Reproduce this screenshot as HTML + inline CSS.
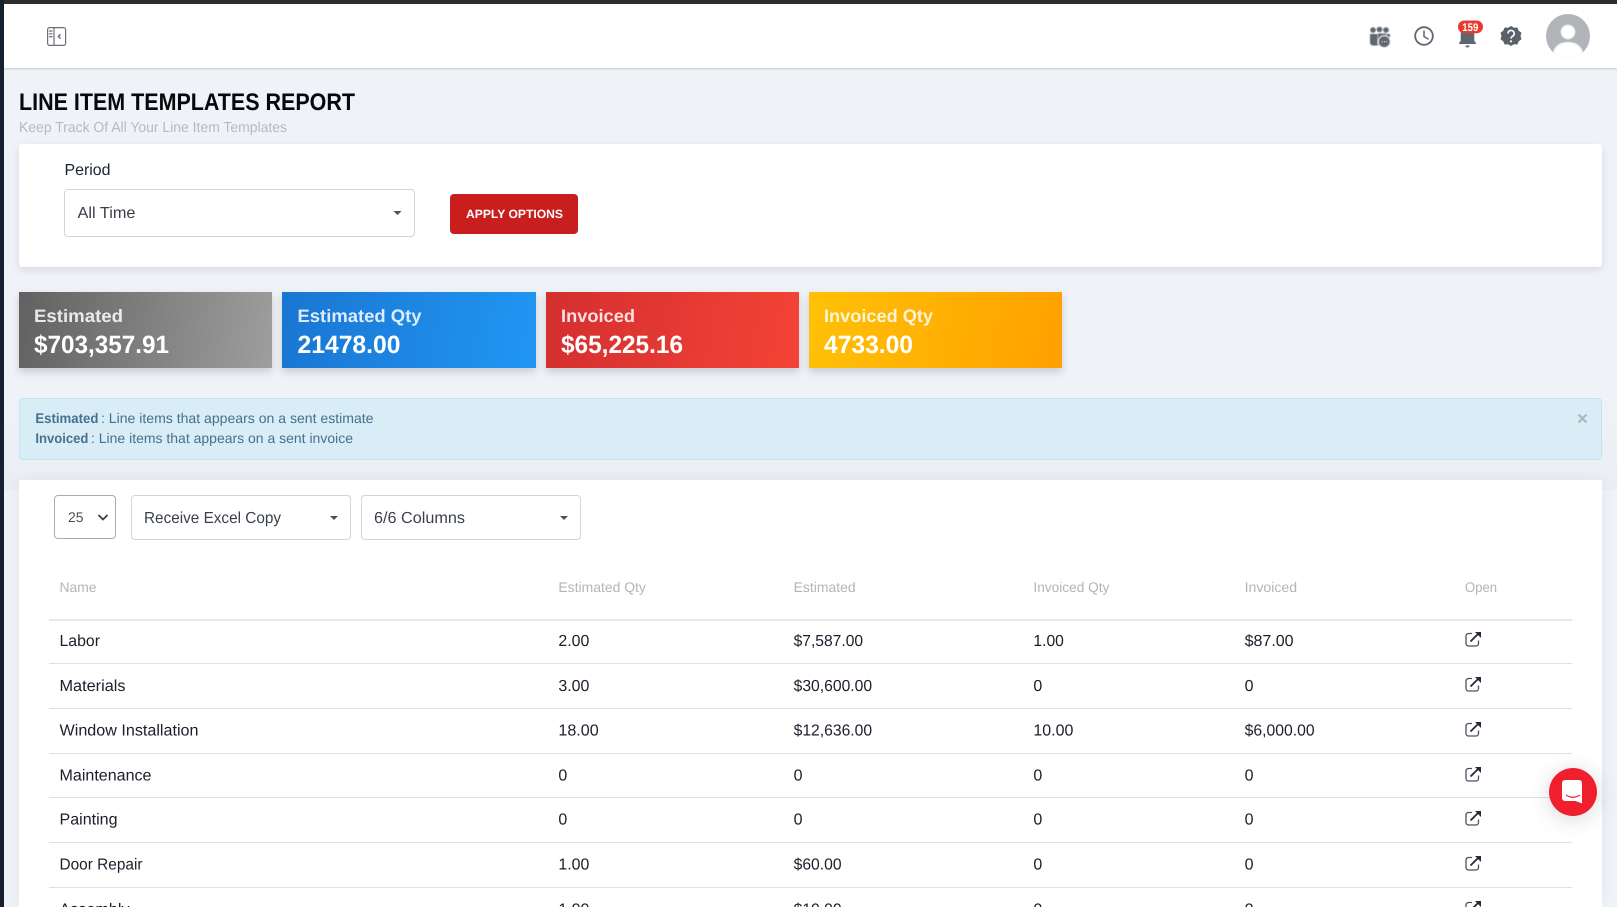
<!DOCTYPE html>
<html lang="en"><head><meta charset="utf-8"><title>Line Item Templates Report</title>
<style>
html,body{margin:0;padding:0;width:1617px;height:907px;overflow:hidden;background:#eff3f8}
.b{position:absolute;box-sizing:border-box}
svg{position:absolute;left:0;top:0}
text{font-family:"Liberation Sans",Arial,sans-serif;font-size:16px;fill:#1a1f2b;text-rendering:geometricPrecision}
.h{font-size:14px;fill:#b5b5b5}
.l{font-size:18px;fill:rgba(255,255,255,.85);font-weight:700}
.v{font-size:25px;fill:#fff;font-weight:700}
.a{font-size:14px;fill:#45718f}
.ab{font-size:14px;fill:#45718f;font-weight:700}
</style></head><body>
<div class="b" style="left:0;top:0;width:1617px;height:4px;background:#2b2d2f"></div>
<div class="b" style="left:0;top:0;width:4px;height:907px;background:#16202f"></div>
<div class="b" style="left:4px;top:4px;width:1613px;height:64px;background:#fff;box-shadow:0 1px 2px rgba(0,0,0,.18)"></div>
<div class="b" style="left:19px;top:144px;width:1583px;height:123px;background:#fff;border-radius:3px;box-shadow:0 3px 8px rgba(0,0,0,.1)"></div>
<div class="b" style="left:64px;top:189px;width:351px;height:48px;background:#fff;border:1px solid #cdd5e1;border-radius:4px"></div>
<div class="b" style="left:450px;top:194px;width:128px;height:40px;background:#c81e1e;border-radius:4px"></div>
<div class="b" style="left:4px;top:380px;width:1613px;height:110px;background:linear-gradient(#eff3f8 0,#eff3f8 15%,#eaeef2 100%)"></div>
<div class="b" style="left:19px;top:292px;width:253px;height:76px;background:linear-gradient(100deg,#616161,#9e9e9e);box-shadow:0 4px 8px rgba(0,0,0,.16)"></div>
<div class="b" style="left:282px;top:292px;width:254px;height:76px;background:linear-gradient(100deg,#1976d2,#2196f3);box-shadow:0 4px 8px rgba(0,0,0,.16)"></div>
<div class="b" style="left:546px;top:292px;width:253px;height:76px;background:linear-gradient(100deg,#d32f2f,#f44336);box-shadow:0 4px 8px rgba(0,0,0,.16)"></div>
<div class="b" style="left:809px;top:292px;width:253px;height:76px;background:linear-gradient(100deg,#ffc107,#ffa000);box-shadow:0 4px 8px rgba(0,0,0,.16)"></div>
<div class="b" style="left:19px;top:398px;width:1583px;height:62px;background:#d9edf6;border:1px solid #bfe6f2;border-radius:4px"></div>
<div class="b" style="left:19px;top:480px;width:1583px;height:427px;background:#fff;box-shadow:0 0 14px rgba(0,0,0,.05)"></div>
<div class="b" style="left:54px;top:495px;width:62px;height:44px;background:#fff;border:1px solid #a9adb3;border-radius:4px"></div>
<div class="b" style="left:131px;top:495px;width:220px;height:45px;background:#fff;border:1px solid #cdd5e1;border-radius:4px"></div>
<div class="b" style="left:361px;top:495px;width:220px;height:45px;background:#fff;border:1px solid #cdd5e1;border-radius:4px"></div>
<div class="b" style="left:49px;top:619px;width:1523px;height:2px;background:#e8e8e8"></div>
<div class="b" style="left:49px;top:663px;width:1523px;height:1px;background:#dbe1ea"></div>
<div class="b" style="left:49px;top:708px;width:1523px;height:1px;background:#dbe1ea"></div>
<div class="b" style="left:49px;top:753px;width:1523px;height:1px;background:#dbe1ea"></div>
<div class="b" style="left:49px;top:797px;width:1523px;height:1px;background:#dbe1ea"></div>
<div class="b" style="left:49px;top:842px;width:1523px;height:1px;background:#dbe1ea"></div>
<div class="b" style="left:49px;top:887px;width:1523px;height:1px;background:#dbe1ea"></div>
<div class="b" style="left:1549px;top:768px;width:48px;height:48px;border-radius:50%;background:#ef1f2d;box-shadow:0 3px 22px rgba(0,0,0,.16)"></div>

<svg width="1617" height="907" viewBox="0 0 1617 907" xmlns="http://www.w3.org/2000/svg">
<defs>
<g id="ext" fill="none">
<path d="M7 2.500H3.500A2.500 2.500 0 0 0 1 5v7.500A2.500 2.500 0 0 0 3.500 15H11a2.500 2.500 0 0 0 2.500-2.500V9.500" stroke="#4a5160" stroke-width="1.300"/>
<path d="M5.500 10.500L12.800 3.200" stroke="#232a38" stroke-width="1.800"/>
<path d="M10 1H16V7Z" fill="#232a38"/>
</g>
<clipPath id="av"><circle cx="1568" cy="36" r="22"/></clipPath>
<filter id="soft"><feGaussianBlur stdDeviation=".45"/></filter>
</defs>

<!-- sidebar toggle -->
<g fill="none" stroke="#6b7077" stroke-width="1.200">
<rect x="47.600" y="27.600" width="18" height="17.800" rx="2"/>
<path d="M54 27.600V45.400M49 31H52.500M49 33.800H52.500M49 36.600H52.500"/>
<path d="M60.500 34.200L58.500 36.400L60.500 38.600" stroke-width="1.500"/>
</g>

<!-- people -->
<g fill="#5f666e" filter="url(#soft)">
<circle cx="1373" cy="30" r="2.800"/><circle cx="1379.500" cy="29.500" r="2.800"/><circle cx="1386" cy="30" r="2.800"/>
<path d="M1370 34h7.500v11.500h-4.500q-3-.3-3-3zM1378 33.500h8v5l-3 1.500-1 5.500h-4zM1386.500 34h3.500v3.500h-3.500z"/>
<circle cx="1384.300" cy="41.700" r="6" stroke="#fff" stroke-width=".8"/>
</g>
<path d="M1381.800 41.800h.9M1384 41.800h.9M1386.200 41.800h.9" stroke="#fff" stroke-width="1"/>
<!-- clock -->
<g fill="none" stroke="#5f666e">
<circle cx="1424" cy="36" r="8.800" stroke-width="1.800"/>
<path d="M1424 30.500V36.500L1428.500 39.300" stroke-width="1.500"/>
</g>
<!-- bell -->
<path d="M1459.200 44v-1.500l1.500-1.500v-7a6.800 6.800 0 0 1 13.600 0v7l1.500 1.500V44z" fill="#5f666e"/>
<path d="M1465.500 45.500h4a2 2 0 0 1-4 0z" fill="#5f666e"/>
<rect x="1458" y="20.500" width="25" height="12.800" rx="6.400" fill="#e8392f"/>
<text x="1462.300" y="31" style="font-size:11px;font-weight:700;fill:#fff" textLength="16" lengthAdjust="spacingAndGlyphs">159</text>
<!-- help -->
<path d="M1511 26l3 1.800 3.400-.3 1.300 3.200 2.800 2-1 3.300 1 3.300-2.800 2-1.300 3.200-3.400-.3-3 1.800-3-1.800-3.400.3-1.300-3.200-2.800-2 1-3.300-1-3.300 2.800-2 1.300-3.200 3.400.3z" fill="#5b6168"/>
<path d="M1508 33.500a3.100 3.100 0 1 1 4.800 2.600c-1.200.8-1.800 1.300-1.800 2.400" fill="none" stroke="#fff" stroke-width="1.600"/>
<circle cx="1511" cy="41.300" r="1.100" fill="#fff"/>
<!-- avatar -->
<circle cx="1568" cy="36" r="22" fill="#b1b4b9"/>
<g clip-path="url(#av)" fill="#fff" filter="url(#soft)">
<circle cx="1568" cy="32" r="7.200"/>
<ellipse cx="1568" cy="52.500" rx="14.500" ry="10.500"/>
</g>

<!-- page heading -->
<text x="19" y="110" textLength="336" lengthAdjust="spacingAndGlyphs" style="font-size:24px;font-weight:700;fill:#06080c">LINE ITEM TEMPLATES REPORT</text>
<text x="19" y="132" textLength="268" lengthAdjust="spacingAndGlyphs" style="font-size:14.500px;fill:#b9b9b9">Keep Track Of All Your Line Item Templates</text>

<!-- options -->
<text x="64.500" y="175" textLength="46" lengthAdjust="spacingAndGlyphs" style="fill:#1c2535">Period</text>
<text x="77.500" y="218" textLength="58" lengthAdjust="spacingAndGlyphs" style="fill:#3a404c">All Time</text>
<path d="M393.500 211h8l-4 4z" fill="#4a5160"/>
<text x="466" y="218" textLength="97" lengthAdjust="spacingAndGlyphs" style="font-size:12px;font-weight:700;fill:#fff">APPLY OPTIONS</text>

<!-- cards -->
<text class="l" x="34" y="322" textLength="89" lengthAdjust="spacingAndGlyphs">Estimated</text>
<text class="v" x="34" y="353" textLength="135" lengthAdjust="spacingAndGlyphs">$703,357.91</text>
<text class="l" x="297.500" y="322" textLength="124" lengthAdjust="spacingAndGlyphs">Estimated Qty</text>
<text class="v" x="297.500" y="353" textLength="103" lengthAdjust="spacingAndGlyphs">21478.00</text>
<text class="l" x="561" y="322" textLength="74" lengthAdjust="spacingAndGlyphs">Invoiced</text>
<text class="v" x="561" y="353" textLength="122" lengthAdjust="spacingAndGlyphs">$65,225.16</text>
<text class="l" x="824" y="322" textLength="109" lengthAdjust="spacingAndGlyphs">Invoiced Qty</text>
<text class="v" x="824" y="353" textLength="89" lengthAdjust="spacingAndGlyphs">4733.00</text>

<!-- alert -->
<text class="ab" x="35.400" y="423" textLength="63" lengthAdjust="spacingAndGlyphs">Estimated</text>
<text class="a" x="101" y="423" textLength="272.500" lengthAdjust="spacingAndGlyphs">: Line items that appears on a sent estimate</text>
<text class="ab" x="35.400" y="443" textLength="53" lengthAdjust="spacingAndGlyphs">Invoiced</text>
<text class="a" x="91" y="443" textLength="262" lengthAdjust="spacingAndGlyphs">: Line items that appears on a sent invoice</text>
<path d="M1578.500 414.500l8 8M1586.500 414.500l-8 8" stroke="#a9b8c0" stroke-width="2.200" fill="none"/>

<!-- table controls -->
<text x="68" y="522" textLength="15.500" lengthAdjust="spacingAndGlyphs" style="font-size:14px;fill:#4a4f57">25</text>
<path d="M98.500 515L103 519.500L107.500 515" fill="none" stroke="#3a3f47" stroke-width="1.800"/>
<text x="144" y="523" textLength="137" lengthAdjust="spacingAndGlyphs" style="fill:#3a404c">Receive Excel Copy</text>
<path d="M330 516h8l-4 4z" fill="#4a5160"/>
<text x="374" y="523" textLength="91" lengthAdjust="spacingAndGlyphs" style="fill:#3a404c">6/6 Columns</text>
<path d="M560 516h8l-4 4z" fill="#4a5160"/>

<!-- table head -->
<text class="h" x="59.500" y="592" textLength="37" lengthAdjust="spacingAndGlyphs">Name</text>
<text class="h" x="558.400" y="592" textLength="87.500" lengthAdjust="spacingAndGlyphs">Estimated Qty</text>
<text class="h" x="793.600" y="592" textLength="62" lengthAdjust="spacingAndGlyphs">Estimated</text>
<text class="h" x="1033.400" y="592" textLength="76" lengthAdjust="spacingAndGlyphs">Invoiced Qty</text>
<text class="h" x="1244.600" y="592" textLength="52.500" lengthAdjust="spacingAndGlyphs">Invoiced</text>
<text class="h" x="1465" y="592" textLength="32" lengthAdjust="spacingAndGlyphs">Open</text>

<!-- rows -->
<text x="59.500" y="646" textLength="40.500" lengthAdjust="spacingAndGlyphs">Labor</text>
<text x="558.400" y="646" textLength="31" lengthAdjust="spacingAndGlyphs">2.00</text>
<text x="793.600" y="646" textLength="69.500" lengthAdjust="spacingAndGlyphs">$7,587.00</text>
<text x="1033.400" y="646" textLength="30.500" lengthAdjust="spacingAndGlyphs">1.00</text>
<text x="1244.600" y="646" textLength="49" lengthAdjust="spacingAndGlyphs">$87.00</text>
<use href="#ext" x="1465" y="631"/>

<text x="59.500" y="691" textLength="66" lengthAdjust="spacingAndGlyphs">Materials</text>
<text x="558.400" y="691" textLength="31" lengthAdjust="spacingAndGlyphs">3.00</text>
<text x="793.600" y="691" textLength="78.500" lengthAdjust="spacingAndGlyphs">$30,600.00</text>
<text x="1033.400" y="691">0</text>
<text x="1244.600" y="691">0</text>
<use href="#ext" x="1465" y="676"/>

<text x="59.500" y="735.600" textLength="139" lengthAdjust="spacingAndGlyphs">Window Installation</text>
<text x="558.400" y="735.600" textLength="40.300" lengthAdjust="spacingAndGlyphs">18.00</text>
<text x="793.600" y="735.600" textLength="78.500" lengthAdjust="spacingAndGlyphs">$12,636.00</text>
<text x="1033.400" y="735.600" textLength="40" lengthAdjust="spacingAndGlyphs">10.00</text>
<text x="1244.600" y="735.600" textLength="70" lengthAdjust="spacingAndGlyphs">$6,000.00</text>
<use href="#ext" x="1465" y="721"/>

<text x="59.500" y="780.600" textLength="92" lengthAdjust="spacingAndGlyphs">Maintenance</text>
<text x="558.400" y="780.600">0</text>
<text x="793.600" y="780.600">0</text>
<text x="1033.400" y="780.600">0</text>
<text x="1244.600" y="780.600">0</text>
<use href="#ext" x="1465" y="766"/>

<text x="59.500" y="824.600" textLength="58" lengthAdjust="spacingAndGlyphs">Painting</text>
<text x="558.400" y="824.600">0</text>
<text x="793.600" y="824.600">0</text>
<text x="1033.400" y="824.600">0</text>
<text x="1244.600" y="824.600">0</text>
<use href="#ext" x="1465" y="810"/>

<text x="59.500" y="869.600" textLength="83" lengthAdjust="spacingAndGlyphs">Door Repair</text>
<text x="558.400" y="869.600" textLength="31" lengthAdjust="spacingAndGlyphs">1.00</text>
<text x="793.600" y="869.600" textLength="48" lengthAdjust="spacingAndGlyphs">$60.00</text>
<text x="1033.400" y="869.600">0</text>
<text x="1244.600" y="869.600">0</text>
<use href="#ext" x="1465" y="855"/>

<text x="59.500" y="914.600" textLength="70" lengthAdjust="spacingAndGlyphs">Assembly</text>
<text x="558.400" y="914.600" textLength="31" lengthAdjust="spacingAndGlyphs">1.00</text>
<text x="793.600" y="914.600" textLength="48" lengthAdjust="spacingAndGlyphs">$10.00</text>
<text x="1033.400" y="914.600">0</text>
<text x="1244.600" y="914.600">0</text>
<use href="#ext" x="1465" y="900"/>

<!-- chat fab -->
<path d="M1565 780h14a3 3 0 0 1 3 3v20.500l-6.500-2.500H1565a3 3 0 0 1-3-3v-15a3 3 0 0 1 3-3z" fill="#fff"/>
<path d="M1566 795q7 4.500 14 0" fill="none" stroke="#ef1f2d" stroke-width="1.200"/>
</svg>
</body></html>
